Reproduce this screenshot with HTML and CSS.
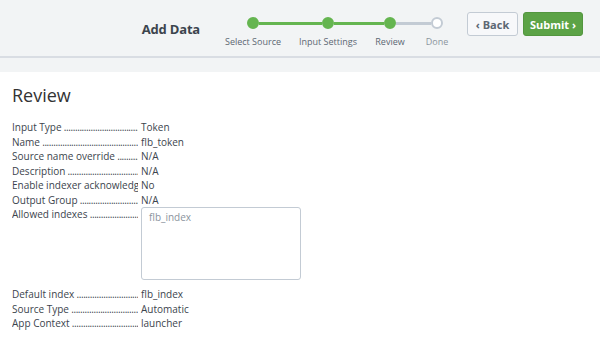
FILE: index.html
```html
<!DOCTYPE html>
<html lang="en">
<head>
  <meta charset="UTF-8">
  <meta name="viewport" content="width=device-width, initial-scale=1.0">
  <title>Add Data - Review</title>
  <link rel="stylesheet" href="styles.css">
</head>
<body>
  <div class="header">
    <div class="title">Add Data</div>
    <div class="stepper">
      <div class="step done-step">
        <span class="dot"></span>
        <span class="step-label">Select Source</span>
      </div>
      <span class="bar bar-1"></span>
      <div class="step done-step">
        <span class="dot"></span>
        <span class="step-label">Input Settings</span>
      </div>
      <span class="bar bar-2"></span>
      <div class="step done-step">
        <span class="dot"></span>
        <span class="step-label">Review</span>
      </div>
      <span class="bar bar-3 off"></span>
      <div class="step">
        <span class="dot"></span>
        <span class="step-label muted">Done</span>
      </div>
    </div>
    <div class="actions">
      <button class="btn btn-back">&lsaquo; Back</button>
      <button class="btn btn-submit">Submit &rsaquo;</button>
    </div>
  </div>

  <div class="gap-band"></div>

  <div class="content">
    <h2 class="heading">Review</h2>
    <div class="review-list">
      <div class="row"><span class="key">Input Type</span><span class="val">Token</span></div>
      <div class="row"><span class="key">Name</span><span class="val">flb_token</span></div>
      <div class="row"><span class="key">Source name override</span><span class="val">N/A</span></div>
      <div class="row"><span class="key">Description</span><span class="val">N/A</span></div>
      <div class="row"><span class="key">Enable indexer acknowledg</span><span class="val">No</span></div>
      <div class="row"><span class="key">Output Group</span><span class="val">N/A</span></div>
      <div class="row row-box">
        <span class="key">Allowed indexes</span>
        <div class="index-box">flb_index</div>
      </div>
      <div class="row"><span class="key">Default index</span><span class="val">flb_index</span></div>
      <div class="row"><span class="key">Source Type</span><span class="val">Automatic</span></div>
      <div class="row"><span class="key">App Context</span><span class="val">launcher</span></div>
    </div>
  </div>
</body>
</html>
```

FILE: styles.css
```css
body {
  margin: 0;
  font-family: "Open Sans", "Liberation Sans", sans-serif;
  background-color: #fff;
  color: #3c444d;
}
.header {
  display: flex;
  align-items: flex-start;
  height: 58px;
  background-color: #f2f4f5;
  border-bottom: 2px solid #d9dde3;
  box-sizing: border-box;
}
.title {
  width: 200px;
  text-align: right;
  margin-top: 20px;
  font-size: 13px;
  font-weight: 700;
  letter-spacing: -0.2px;
  color: #3c444d;
}
.stepper {
  display: flex;
  align-items: flex-start;
  margin-left: 47px;
  margin-top: 17px;
}
.step {
  width: 12px;
  display: flex;
  flex-direction: column;
  align-items: center;
}
.dot {
  width: 12px;
  height: 12px;
  border-radius: 50%;
  box-sizing: border-box;
  border: 2px solid #c3cbd4;
  background-color: #fff;
}
.done-step .dot {
  background-color: #65b550;
  border-color: #65b550;
}
.step-label {
  margin-top: 6px;
  white-space: nowrap;
  font-size: 9px;
  color: #5c6773;
}
.step-label.muted {
  color: #8b949e;
}
.bar {
  height: 3px;
  margin-top: 4.5px;
  background-color: #65b550;
}
.bar.off {
  background-color: #c3cbd4;
}
.bar-1 { width: 63px; }
.bar-2 { width: 50px; }
.bar-3 { width: 35px; }
.actions {
  display: flex;
  gap: 5px;
  margin-left: 24px;
  margin-top: 12px;
}
.btn {
  height: 24px;
  border-radius: 3px;
  font-family: inherit;
  font-size: 11px;
  font-weight: 700;
  padding: 0;
  cursor: pointer;
}
.btn-back {
  width: 51px;
  background-color: #f7f8fa;
  border: 1px solid #c3cbd4;
  color: #5c6773;
}
.btn-submit {
  width: 60px;
  background-color: #5ca346;
  border: 1px solid #53963f;
  color: #fff;
}
.gap-band {
  height: 14px;
  background-color: #f2f4f5;
}
.content {
  padding: 0 12px;
}
.heading {
  margin: 11px 0 13px;
  font-size: 18px;
  font-weight: 400;
  line-height: 24px;
  color: #333;
}
.row {
  display: flex;
  font-size: 10px;
  line-height: 14.5px;
}
.key {
  width: 126px;
  margin-right: 3px;
  white-space: nowrap;
  overflow: hidden;
}
.key::after {
  content: " ..................................................................................";
  letter-spacing: -0.4px;
}
.row-box {
  margin-bottom: 7px;
}
.index-box {
  width: 160px;
  height: 73px;
  box-sizing: border-box;
  border: 1px solid #c3cbd4;
  border-radius: 3px;
  padding: 2px 7px;
  color: #8b949e;
  font-size: 10px;
  line-height: 14.5px;
}
```
